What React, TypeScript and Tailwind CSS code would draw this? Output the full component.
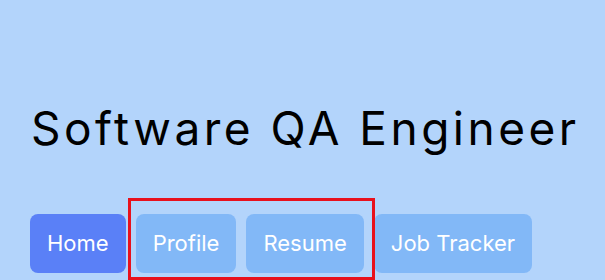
const navItems = [
  { label: 'Home', active: true },
  { label: 'Profile', active: false },
  { label: 'Resume', active: false },
  { label: 'Job Tracker', active: false },
];

export default function App() {
  return (
    <div
      className="relative h-[280px] w-full overflow-hidden bg-[#b3d4fb] pl-[30px] pt-[105px]"
      style={{ fontFamily: 'Inter, "Liberation Sans", sans-serif' }}
    >
      <h1 className="ml-[1px] text-[46px] leading-[46px] tracking-[3.5px] text-black">Software QA Engineer</h1>
      <nav className="mt-[63px] flex gap-[10px]">
        {navItems.map((item) => (
          <button
            key={item.label}
            className={
              item.active
                ? 'h-[59px] rounded-lg bg-[#5a80f7] px-[17px] text-[22px] text-white'
                : 'h-[59px] rounded-lg bg-[#82b8f7] px-[17px] text-[22px] text-white'
            }
          >
            {item.label}
          </button>
        ))}
      </nav>
      <div className="pointer-events-none absolute left-[128px] top-[198px] h-[82px] w-[247px] border-[3px] border-[#e8101c]" />
    </div>
  );
}
